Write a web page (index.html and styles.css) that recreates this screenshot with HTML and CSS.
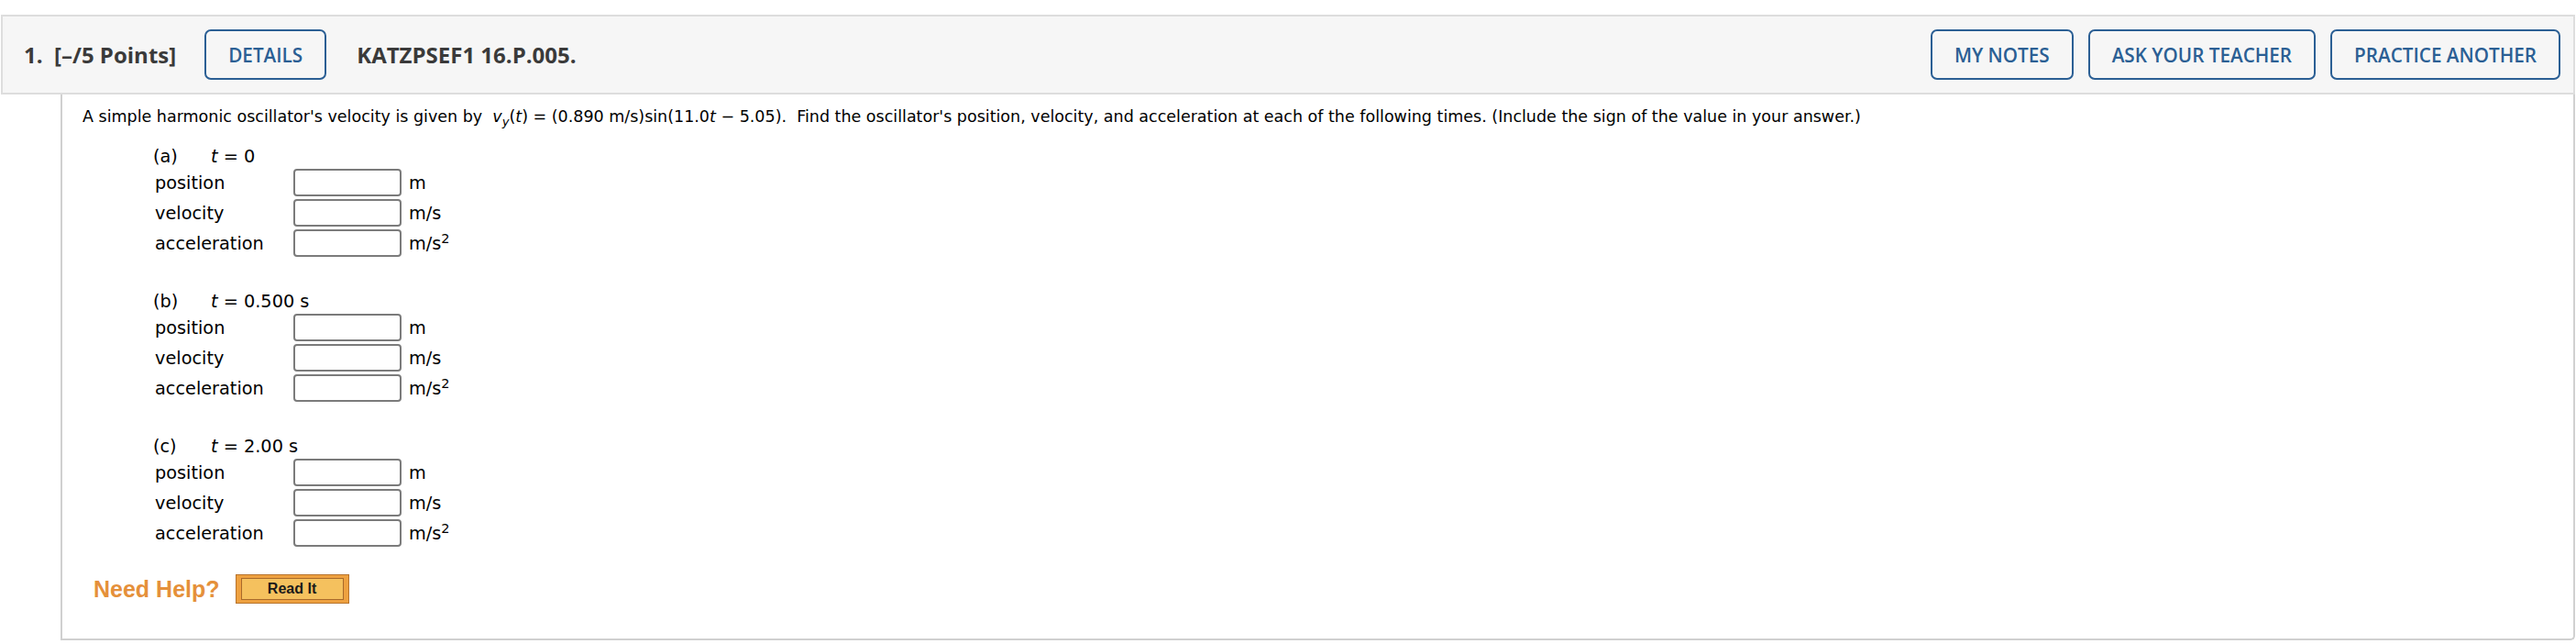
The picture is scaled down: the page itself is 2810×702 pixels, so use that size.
FILE: index.html
```html
<!DOCTYPE html>
<html>
<head>
<meta charset="utf-8">
<link rel="stylesheet" href="styles.css">
</head>
<body>
<div class="question">
  <div class="qhead">
    <span class="qnum">1.&nbsp; [–/5 Points]</span>
    <span class="hbtn">DETAILS</span>
    <span class="qid">KATZPSEF1 16.P.005.</span>
    <div class="hright">
      <span class="hbtn">MY NOTES</span>
      <span class="hbtn">ASK YOUR TEACHER</span>
      <span class="hbtn">PRACTICE ANOTHER</span>
    </div>
  </div>
  <div class="qbody">
    <p class="prompt">A simple harmonic oscillator's velocity is given by&nbsp; <i>v<sub>y</sub></i>(<i>t</i>) = (0.890 m/s)sin(11.0<i>t</i> − 5.05).&nbsp; Find the oscillator's position, velocity, and acceleration at each of the following times. (Include the sign of the value in your answer.)</p>

    <div class="part">
      <div class="ptitle"><span class="plabel">(a)</span><span><i>t</i> = 0</span></div>
      <div class="row"><span class="lbl">position</span><span class="inp"></span><span class="unit">m</span></div>
      <div class="row"><span class="lbl">velocity</span><span class="inp"></span><span class="unit">m/s</span></div>
      <div class="row"><span class="lbl">acceleration</span><span class="inp"></span><span class="unit">m/s<sup>2</sup></span></div>
    </div>

    <div class="part">
      <div class="ptitle"><span class="plabel">(b)</span><span><i>t</i> = 0.500 s</span></div>
      <div class="row"><span class="lbl">position</span><span class="inp"></span><span class="unit">m</span></div>
      <div class="row"><span class="lbl">velocity</span><span class="inp"></span><span class="unit">m/s</span></div>
      <div class="row"><span class="lbl">acceleration</span><span class="inp"></span><span class="unit">m/s<sup>2</sup></span></div>
    </div>

    <div class="part">
      <div class="ptitle"><span class="plabel">(c)</span><span><i>t</i> = 2.00 s</span></div>
      <div class="row"><span class="lbl">position</span><span class="inp"></span><span class="unit">m</span></div>
      <div class="row"><span class="lbl">velocity</span><span class="inp"></span><span class="unit">m/s</span></div>
      <div class="row"><span class="lbl">acceleration</span><span class="inp"></span><span class="unit">m/s<sup>2</sup></span></div>
    </div>

    <div class="help">
      <span class="needhelp">Need Help?</span>
      <span class="readit"><span class="readit-inner">Read It</span></span>
    </div>
  </div>
</div>
</body>
</html>
```

FILE: styles.css
```css
html, body {
  margin: 0;
  padding: 0;
  background: #ffffff;
}

body {
  font-family: "DejaVu Sans", Verdana, sans-serif;
  color: #000;
}

.question {
  padding-top: 16px;
  width: 2810px;
}

.qhead {
  margin: 0 1px;
  height: 83px;
  border: 2px solid #dddddd;
  background: #f6f6f6;
  display: flex;
  align-items: center;
  padding: 0 14px 0 23px;
  font-family: "Open Sans", sans-serif;
  color: #3a3a3a;
}

.qnum, .qid {
  font-size: 24px;
  font-weight: 700;
  white-space: pre;
}

.qnum {
  margin-right: 31px;
}

.qid {
  margin-left: 33px;
}

.hbtn {
  box-sizing: border-box;
  height: 55px;
  display: inline-flex;
  align-items: center;
  padding: 0 24px;
  border: 2px solid #2b5f94;
  border-radius: 7px;
  color: #2b5f94;
  font-family: "Open Sans", sans-serif;
  font-size: 20.7px;
  font-weight: 600;
  white-space: nowrap;
}

.hright {
  margin-left: auto;
  display: flex;
  gap: 16px;
}

.qbody {
  margin-left: 66px;
  margin-right: 1px;
  border: 2px solid #d0d0d0;
  border-top: 0;
  border-radius: 0 0 5px 0;
  padding: 12px 0 38px 22px;
}

.prompt {
  margin: 0 0 20px 0;
  font-size: 17.5px;
  line-height: 24px;
  white-space: nowrap;
}

.prompt sub {
  font-size: 0.75em;
  line-height: 0;
  vertical-align: -0.3em;
}

.part {
  margin-left: 79px;
  font-size: 19.3px;
}

.part + .part {
  margin-top: 34px;
}

.ptitle {
  height: 25px;
  line-height: 24px;
  display: flex;
}

.plabel {
  width: 63px;
  margin-left: -2px;
}

.row {
  height: 33px;
  display: grid;
  grid-template-columns: 143px 118px auto;
  column-gap: 8px;
  align-items: start;
}

.lbl, .unit {
  line-height: 30px;
  padding-top: 1px;
}

.unit sup {
  font-size: 0.75em;
  line-height: 0;
  vertical-align: 0.5em;
}

.inp {
  box-sizing: border-box;
  height: 30px;
  border: 2px solid #7b7b7b;
  border-radius: 4px;
  background: #fff;
}

.help {
  margin-top: 27px;
  margin-left: 12px;
  height: 32px;
  display: flex;
  align-items: center;
  gap: 17px;
}

.needhelp {
  font-family: "Liberation Sans", Arial, sans-serif;
  font-weight: 700;
  font-size: 25px;
  line-height: 32px;
  color: #e5903a;
}

.readit {
  box-sizing: border-box;
  width: 124px;
  height: 32px;
  border: 1px solid #b7732c;
  background: #eea140;
  padding: 3px 5px;
  display: flex;
}

.readit-inner {
  flex: 1;
  border: 1px solid #a8692a;
  background: #f5c15e;
  display: flex;
  align-items: center;
  justify-content: center;
  font-family: "Liberation Sans", Arial, sans-serif;
  font-weight: 700;
  font-size: 16px;
  color: #1a1a1a;
}
```
